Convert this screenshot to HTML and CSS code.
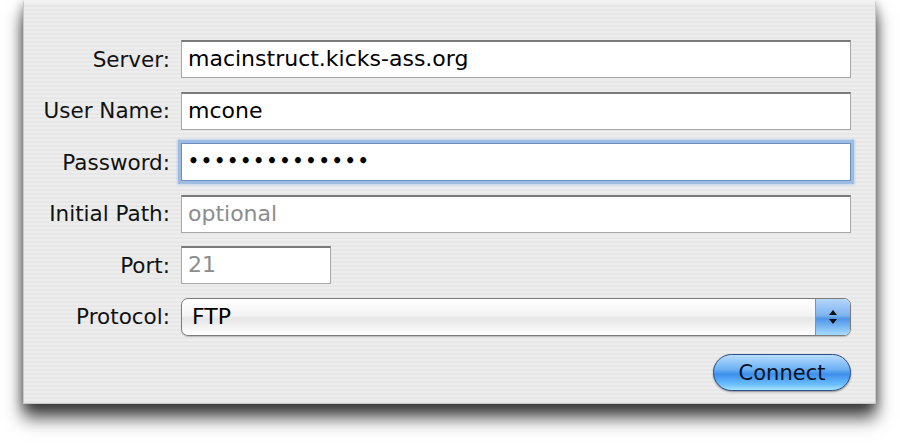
FILE: index.html
```html
<!DOCTYPE html>
<html lang="en">
<head>
    <meta charset="UTF-8">
    <meta name="viewport" content="width=device-width, initial-scale=1.0">
    <title>Connect to Server</title>
    <link rel="stylesheet" href="styles.css">
</head>
<body>
    <div class="sheet">
        <form class="form">
            <label class="label" for="server">Server:</label>
            <div class="field" id="server">macinstruct.kicks-ass.org</div>

            <label class="label" for="username">User Name:</label>
            <div class="field" id="username">mcone</div>

            <label class="label" for="password">Password:</label>
            <div class="field focused dots" id="password">••••••••••••••</div>

            <label class="label" for="path">Initial Path:</label>
            <div class="field placeholder" id="path">optional</div>

            <label class="label" for="port">Port:</label>
            <div class="field port placeholder" id="port">21</div>

            <label class="label" for="protocol">Protocol:</label>
            <div class="select" id="protocol">
                <span class="select-value">FTP</span>
                <span class="stepper">
                    <svg width="10" height="18" viewBox="0 0 10 18">
                        <path d="M5 2 L9 7 L1 7 Z" fill="#111"/>
                        <path d="M5 16 L9 11 L1 11 Z" fill="#111"/>
                    </svg>
                </span>
            </div>

            <div class="actions">
                <button type="button" class="btn">Connect</button>
            </div>
        </form>
    </div>
</body>
</html>
```

FILE: styles.css
```css
html, body {
    height: 100%;
}
body {
    margin: 0;
    background-color: #fff;
    font-family: "DejaVu Sans", Verdana, sans-serif;
}
.sheet {
    position: relative;
    margin-left: 23px;
    width: 853px;
    height: 404px;
    box-sizing: border-box;
    border: 1px solid #c8c8c8;
    border-top: 3px solid #f2f2f2;
    background-color: #ebebeb;
    background-image: repeating-linear-gradient(to bottom, #ededed 0, #ededed 2px, #e7e7e7 2px, #e7e7e7 4px);
    box-shadow: 0 14px 16px rgba(0, 0, 0, 0.7), 0 3px 10px rgba(0, 0, 0, 0.35);
    padding-top: 37px;
}
.form {
    display: grid;
    grid-template-columns: 146px 670px;
    column-gap: 11px;
    row-gap: 13.5px;
    align-items: center;
}
.label {
    text-align: right;
    font-size: 21.5px;
    color: #111;
}
.field {
    height: 38px;
    box-sizing: border-box;
    background-color: #fff;
    border: 1px solid #a8a8a8;
    border-top: 2px solid #7a7a7a;
    padding: 0 6px;
    font-size: 22px;
    line-height: 34px;
    color: #000;
    white-space: nowrap;
    overflow: hidden;
}
.focused {
    border: 1px solid #6d8fbf;
    box-shadow: 0 0 0 3px #9dbbe3, 0 0 2px 4px #bfd3ee;
}
.dots {
    font-size: 17px;
    font-weight: bold;
    letter-spacing: 2.2px;
}
.placeholder {
    color: #8c8c8c;
}
.port {
    width: 150px;
}
.select {
    height: 38px;
    box-sizing: border-box;
    display: flex;
    align-items: stretch;
    border: 1px solid #7c7c7c;
    border-radius: 7px;
    overflow: hidden;
    background-image: linear-gradient(to bottom, #ffffff 0%, #f4f4f4 45%, #e6e6e6 55%, #ffffff 100%);
    box-shadow: 0 1px 1px rgba(0, 0, 0, 0.2);
}
.select-value {
    flex: 1;
    padding-left: 10px;
    font-size: 22px;
    line-height: 36px;
    color: #000;
}
.stepper {
    width: 34px;
    display: flex;
    align-items: center;
    justify-content: center;
    border-left: 1px solid #6f94c8;
    background-image: linear-gradient(to bottom, #b4d6fb 0%, #7fb4f0 45%, #4f94e8 55%, #a6dcff 100%);
}
.actions {
    grid-column: 2;
    display: flex;
    justify-content: flex-end;
    margin-top: 5px;
}
.btn {
    width: 138px;
    height: 37px;
    border: 1px solid #2c4f8c;
    border-radius: 19px;
    background-image: linear-gradient(to bottom, #b8dcff 0%, #6fb2f5 40%, #3d8fec 55%, #6cc0ff 85%, #a8e6ff 100%);
    box-shadow: 0 1px 2px rgba(0, 0, 0, 0.4);
    font-family: "DejaVu Sans", Verdana, sans-serif;
    font-size: 21px;
    color: #0a1426;
    padding: 0;
    cursor: pointer;
}
```
